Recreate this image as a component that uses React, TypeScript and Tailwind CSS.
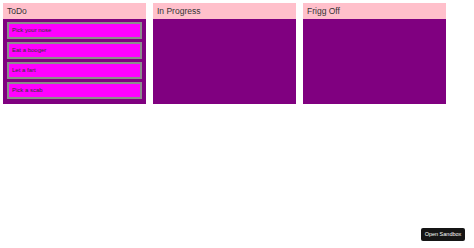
import React from "react";

const columns = [
  { title: "ToDo", tasks: ["Pick your nose", "Eat a booger", "Let a fart", "Pick a scab"] },
  { title: "In Progress", tasks: [] as string[] },
  { title: "Frigg Off", tasks: [] as string[] },
];

export default function App() {
  return (
    <div className="relative h-[248px] w-[474px] bg-white" style={{ fontFamily: '"Liberation Sans", Arial, sans-serif' }}>
      <div className="flex gap-[7px] pl-[3px] pt-[3px]">
        {columns.map((c) => (
          <div key={c.title} className="flex w-[143px] flex-col">
            <div className="flex h-[16px] items-center bg-[#ffc0cb] pl-[4px] text-[8.5px] text-[#333]">{c.title}</div>
            <div className="flex h-[85px] flex-col gap-[3px] bg-[#800080] px-[4px] pt-[3px]">
              {c.tasks.map((t) => (
                <div key={t} className="flex h-[17px] items-center border-2 border-[#8c8c8c] bg-[#ff00ff] pl-[3px] text-[6px] text-[#333]">
                  {t}
                </div>
              ))}
            </div>
          </div>
        ))}
      </div>
      <div className="absolute left-[421px] top-[228px] flex h-[13px] w-[44px] items-center justify-center rounded-[2px] bg-[#151515] text-[5.5px] text-white">
        Open Sandbox
      </div>
    </div>
  );
}
